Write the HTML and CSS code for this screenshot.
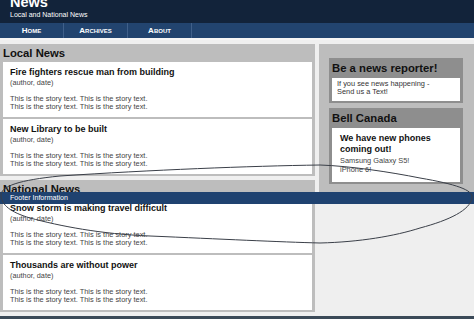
FILE: index.html
```html
<!doctype html>
<html>
   <head>
      <meta charset="utf-8">
      <title>News</title>
      <link rel="stylesheet" href="styles.css">
   </head>
   <body>
      <header class="masthead">
         <h1 class="site-title">News</h1>
         <p class="tagline">Local and National News</p>
      </header>
      <nav class="nav">
         <a href="#">Home</a>
         <a href="#">Archives</a>
         <a href="#">About</a>
      </nav>
      <div class="page">
         <div class="main-col">
            <section class="panel">
               <h2>Local News</h2>
               <article class="story">
                  <h4>Fire fighters rescue man from building</h4>
                  <p class="byline">(author, date)</p>
                  <p class="text">This is the story text. This is the story text.<br>This is the story text. This is the story text.</p>
               </article>
               <article class="story">
                  <h4>New Library to be built</h4>
                  <p class="byline">(author, date)</p>
                  <p class="text">This is the story text. This is the story text.<br>This is the story text. This is the story text.</p>
               </article>
            </section>
            <section class="panel">
               <h2>National News</h2>
               <article class="story">
                  <h4>Snow storm is making travel difficult</h4>
                  <p class="byline">(author, date)</p>
                  <p class="text">This is the story text. This is the story text.<br>This is the story text. This is the story text.</p>
               </article>
               <article class="story">
                  <h4>Thousands are without power</h4>
                  <p class="byline">(author, date)</p>
                  <p class="text">This is the story text. This is the story text.<br>This is the story text. This is the story text.</p>
               </article>
            </section>
         </div>
         <aside class="sidebar">
            <div class="box">
               <h3>Be a news reporter!</h3>
               <div class="box-body">
                  <p>If you see news happening -<br>Send us a Text!</p>
               </div>
            </div>
            <div class="box">
               <h3>Bell Canada</h3>
               <div class="box-body promo">
                  <h4>We have new phones coming out!</h4>
                  <p>Samsung Galaxy S5!<br>iPhone 6!</p>
               </div>
            </div>
         </aside>
      </div>
      <div class="taskbar"></div>
      <footer class="footer">Footer Information</footer>
      <svg class="scribble" width="474" height="319" viewBox="0 0 474 319">
         <path d="M320 165 C250 166 150 170 60 176 C20 180 0 186 1 196 C2 205 10 212 30 218 C60 226 100 234 150 236 C220 239 280 242 320 243 C360 242 395 236 420 228 C450 220 470 210 472 198 C474 190 455 184 420 178 C390 172 350 166 320 165 Z" fill="none" stroke="#3a3f48" stroke-width="1"/>
      </svg>
   </body>
</html>
```

FILE: styles.css
```css
body {
margin: 0;
background: #efefef;
font-family: 'Liberation Sans', Arial, sans-serif;
color: #111;
}
p { margin: 0; }

.masthead {
height: 23px;
overflow: hidden;
padding: 0 10px;
background: #12233a;
color: #fff;
}
.site-title {
margin: -5px 0 0;
font-size: 14.5px;
line-height: 15px;
}
.tagline {
font-size: 7px;
line-height: 10px;
}

.nav {
display: flex;
height: 15px;
background: #22446f;
border-bottom: 2px solid #f6f6f6;
}
.nav a {
width: 63px;
border-right: 1px solid #40608a;
text-align: center;
color: #fff;
text-decoration: none;
font-size: 8px;
font-weight: bold;
font-variant: small-caps;
line-height: 15px;
}

.page {
display: flex;
align-items: flex-start;
gap: 4px;
padding-top: 4px;
}
.main-col {
width: 315px;
display: flex;
flex-direction: column;
gap: 4px;
}
.panel {
background: #bdbdbd;
padding: 0 3px 2px 3px;
}
.panel h2 {
margin: 0;
font-size: 11.3px;
line-height: 18px;
}
.story {
background: #fff;
padding: 5px 7px 6px;
}
.story + .story { margin-top: 2px; }
.story h4 {
margin: 0;
font-size: 9px;
line-height: 11px;
}
.byline {
font-size: 7.3px;
line-height: 9px;
color: #444;
}
.text {
margin-top: 8px;
font-size: 7.4px;
line-height: 8px;
color: #444;
}

.sidebar {
flex: 1;
height: 148px;
box-sizing: border-box;
padding: 14px 11px 0 10px;
background: #bdbdbd;
}
.box {
background: #8e8e8e;
padding: 2px 3px;
}
.box + .box { margin-top: 5px; }
.box h3 {
margin: 0;
padding: 1px 0 3px;
font-size: 11.3px;
line-height: 14px;
}
.box-body {
background: #fff;
padding: 2px 5px 5px;
font-size: 7.4px;
line-height: 8px;
color: #333;
}
.promo { padding: 5px 8px 7px; }
.promo h4 {
margin: 0 0 1.5px;
font-size: 9px;
line-height: 10.5px;
color: #111;
}
.promo p {
line-height: 9.5px;
color: #444;
}

.taskbar {
margin-top: 4px;
height: 3px;
background: #3b4a58;
}
.footer {
position: fixed;
top: 192px;
left: 0;
right: 0;
height: 12px;
box-sizing: border-box;
padding: 1px 0 0 10px;
background: #1f4270;
color: #fff;
font-size: 7.1px;
line-height: 11px;
}
.scribble {
position: absolute;
top: 0;
left: 0;
pointer-events: none;
}
```
